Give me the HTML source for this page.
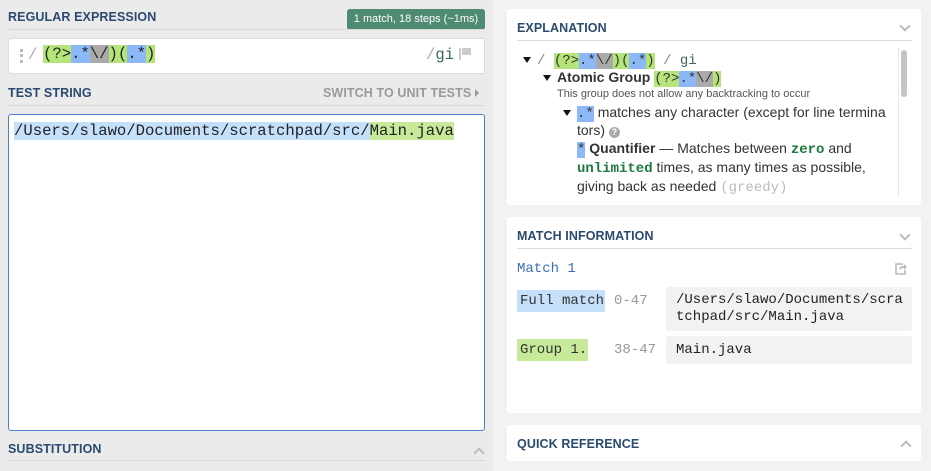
<!DOCTYPE html>
<html><head><style>
*{margin:0;padding:0;box-sizing:border-box}
body{width:931px;height:471px;overflow:hidden;background:#f2f2f2;font-family:"Liberation Sans",sans-serif;position:relative;color:#333}
.abs{position:absolute}
.h{font-weight:bold;font-size:12.5px;color:#2b4a6f;letter-spacing:0.1px}
.mono{font-family:"Liberation Mono",monospace}
.g{background:#b5e57a}.b{background:#8db8f7}.gr{background:#aaa}
.card{position:absolute;background:#fff;border-radius:3px;left:507px;width:414px}
.line{position:absolute;height:1px;background:#dadada}
.chev{position:absolute;width:8px;height:8px;border-right:2px solid #bbb;border-bottom:2px solid #bbb}
.tri{display:inline-block;width:0;height:0;border-left:4px solid transparent;border-right:4px solid transparent;border-top:6px solid #111;vertical-align:middle;margin-right:6px}
.ex div{height:18px;line-height:18px}
</style></head><body>
<div class="abs" style="left:0;top:0;width:493px;height:471px;background:#ebebeb"></div>
<div class="abs h" style="left:8px;top:10px">REGULAR EXPRESSION</div>
<div class="abs" style="left:347px;top:9px;width:138px;height:21px;background:#4f8a73;border-radius:3px;color:#fff;font-size:11px;line-height:21px;text-align:center">1 match, 18 steps (~1ms)</div>
<div class="line" style="left:8px;top:29px;width:477px"></div>
<div class="abs" style="left:8px;top:38px;width:477px;height:36px;background:#fff;border:1px solid #ddd;border-radius:3px"></div>
<div class="abs" style="left:20px;top:49px;width:3px;height:14px;border-left:3px dotted #bbb"></div>
<div class="abs mono" style="left:28px;top:46px;font-size:15.6px;color:#aaa">/</div>
<div class="abs mono" style="left:43px;top:45px;font-size:15.6px;line-height:19px;color:#222"><span class="g">(?&gt;</span><span class="b">.*</span><span class="gr">\/</span><span class="g">)(</span><span class="b">.*</span><span class="g">)</span></div>
<div class="abs mono" style="left:426px;top:46px;font-size:15.6px;color:#aaa">/<span style="color:#3f6a4e">gi</span></div>
<div class="abs" style="left:459px;top:48px;width:12px;height:12px;border-left:2px solid #ccc"><div style="margin-left:1px;width:9px;height:7px;background:#ccc"></div></div>
<div class="abs h" style="left:8px;top:86px">TEST STRING</div>
<div class="abs h" style="left:323px;top:86px;color:#999">SWITCH TO UNIT TESTS</div>
<div class="abs" style="left:475px;top:89px;border-top:4px solid transparent;border-bottom:4px solid transparent;border-left:4px solid #999"></div>
<div class="line" style="left:8px;top:105px;width:477px"></div>
<div class="abs" style="left:8px;top:114px;width:477px;height:317px;background:#fff;border:1px solid #4a7fcf;border-radius:3px"></div>
<div class="abs mono" style="left:14px;top:121px;font-size:15.6px;line-height:20px;color:#222"><span style="background:#c5e0fb">/Users/slawo/Documents/scratchpad/src/</span><span style="background:#c7ea9a">Main.java</span></div>
<div class="abs h" style="left:8px;top:442px">SUBSTITUTION</div>
<div class="chev" style="left:475px;top:449px;transform:rotate(-135deg)"></div>
<div class="line" style="left:8px;top:460px;width:477px"></div>

<div class="card" style="top:9px;height:196px"></div>
<div class="abs h" style="left:517px;top:21px">EXPLANATION</div>
<div class="chev" style="left:901px;top:22px;transform:rotate(45deg)"></div>
<div class="line" style="left:517px;top:40px;width:395px"></div>
<div class="abs" style="left:898px;top:48px;width:10px;height:148px;border-left:1px solid #e5e5e5"></div>
<div class="abs" style="left:901px;top:50px;width:6px;height:47px;background:#c4c4c4;border-radius:3px"></div>
<div class="abs ex" style="left:523px;top:50px;font-size:14px;white-space:nowrap;height:146px;overflow:hidden;width:375px">
<div><span class="tri"></span><span class="mono" style="color:#888">/ </span><span class="mono"><span class="g">(?&gt;</span><span class="b">.*</span><span class="gr">\/</span><span class="g">)(</span><span class="b">.*</span><span class="g">)</span></span><span class="mono" style="color:#3f6a4e"> <span style="color:#888">/</span> gi</span></div>
<div style="margin-left:20px"><span class="tri"></span><b>Atomic Group</b> <span class="mono"><span class="g">(?&gt;</span><span class="b">.*</span><span class="gr">\/</span><span class="g">)</span></span></div>
<div style="margin-left:34px;font-size:11px;height:17px;line-height:16px;color:#555">This group does not allow any backtracking to occur</div>
<div style="margin-left:40px"><span class="tri"></span><span class="mono b">.*</span> matches any character (except for line termina</div>
<div style="margin-left:54px">tors) <span style="display:inline-block;width:11px;height:11px;border-radius:50%;background:#aaa;color:#fff;font-size:9px;line-height:11px;text-align:center;font-weight:bold">?</span></div>
<div style="margin-left:54px"><span class="mono b">*</span> <b>Quantifier</b> — Matches between <b class="mono" style="color:#1c7a3e">zero</b> and</div>
<div style="margin-left:54px;height:19px;line-height:20px"><b class="mono" style="color:#1c7a3e">unlimited</b> times, as many times as possible,</div>
<div style="margin-left:54px;height:19px;line-height:20px">giving back as needed <span class="mono" style="color:#bbb">(greedy)</span></div>
</div>

<div class="card" style="top:217px;height:196px"></div>
<div class="abs h" style="left:517px;top:229px">MATCH INFORMATION</div>
<div class="chev" style="left:901px;top:231px;transform:rotate(45deg)"></div>
<div class="line" style="left:517px;top:248px;width:395px"></div>
<div class="abs mono" style="left:517px;top:261px;font-size:14px;color:#3d6fb5">Match 1</div>
<svg class="abs" style="left:894px;top:262px" width="14" height="13" viewBox="0 0 14 13"><path d="M9 2H2v10h9V8" fill="none" stroke="#bbb" stroke-width="1.6"/><path d="M5 8c0-3 2-4 5-4V2l3 3-3 3V6c-2 0-4 1-5 2z" fill="#bbb"/></svg>
<div class="abs mono" style="left:517px;top:290px;width:88px;height:22px;background:#c5e0fb;font-size:14px;line-height:22px;padding-left:3px">Full match</div>
<div class="abs mono" style="left:614px;top:290px;font-size:14px;line-height:22px;color:#999">0-47</div>
<div class="abs mono" style="left:666px;top:287px;width:246px;height:44px;background:#f2f2f2;border-radius:3px;font-size:14px;line-height:17px;padding:5px 0 0 10px;color:#222">/Users/slawo/Documents/scra<br>tchpad/src/Main.java</div>
<div class="abs mono" style="left:517px;top:339px;width:71px;height:22px;background:#c7ea9a;font-size:14px;line-height:22px;padding-left:3px">Group 1.</div>
<div class="abs mono" style="left:614px;top:339px;font-size:14px;line-height:22px;color:#999">38-47</div>
<div class="abs mono" style="left:666px;top:336px;width:246px;height:28px;background:#f2f2f2;border-radius:3px;font-size:14px;line-height:28px;padding-left:10px;color:#222">Main.java</div>

<div class="card" style="top:425px;height:36px"></div>
<div class="abs h" style="left:517px;top:437px">QUICK REFERENCE</div>
<div class="chev" style="left:902px;top:442px;transform:rotate(-135deg)"></div>
</body></html>
